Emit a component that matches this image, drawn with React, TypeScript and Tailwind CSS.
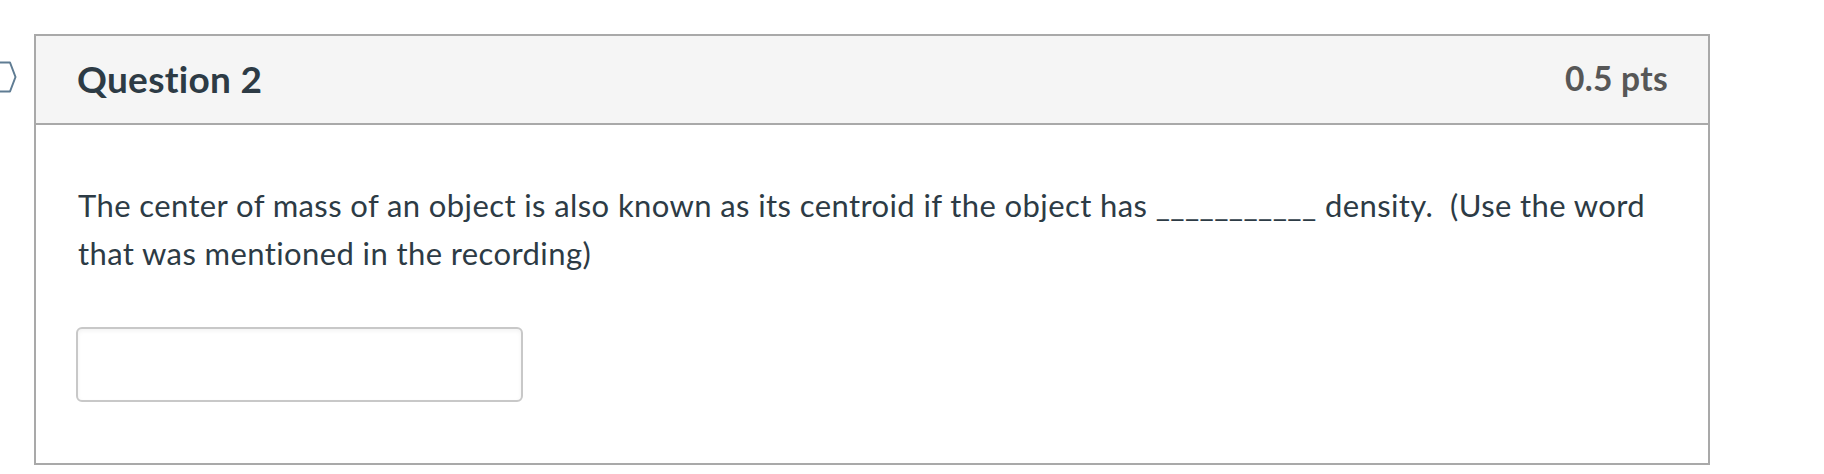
import React from 'react';

const FlagMarker = () => (
  <svg
    className="absolute left-0 top-[60px]"
    width="18"
    height="34"
    viewBox="0 0 18 34"
    fill="none"
  >
    <path
      d="M-4 2.5 H10 L15.5 17 L10 31.5 H-4"
      stroke="#5f7c93"
      strokeWidth="2"
      strokeLinejoin="round"
    />
  </svg>
);

const App = () => {
  return (
    <div className="relative w-[1824px] h-[474px] bg-white pt-[34px] pl-[34px] font-['Lato','Liberation_Sans',sans-serif]">
      <FlagMarker />
      <div className="w-[1676px] border-2 border-[#a9a9a9]">
        <div className="h-[89px] flex items-center justify-between pl-[41px] pr-[40px] bg-[#f5f5f5] border-b-2 border-[#a9a9a9]">
          <h2 className="text-[37px] tracking-[0.3px] font-bold text-[#2d3b45] leading-none -mt-[2px]">Question 2</h2>
          <div className="text-[33.5px] tracking-[0.3px] font-bold text-[#575757] leading-none -mt-[2px]">0.5 pts</div>
        </div>
        <div className="pt-[56px] pb-[61px] pl-[42px] pr-[42px]">
          <p className="text-[31px] tracking-[0.4px] leading-[48px] text-[#2d3b45]">
            The center of mass of an object is also known as its centroid if the object has ___________ density.&nbsp;&nbsp;(Use the word that was mentioned in the recording)
          </p>
          <input
            type="text"
            className="block mt-[50px] -ml-[2px] w-[447px] h-[75px] rounded-[6px] border-2 border-[#c8c8c8] bg-white shadow-inner outline-none"
          />
        </div>
      </div>
    </div>
  );
};

export default App;
